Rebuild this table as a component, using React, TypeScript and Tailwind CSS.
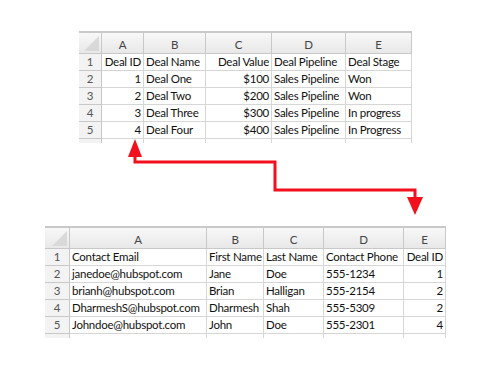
import React from "react";

type Col = { w: number; align: "left" | "right" };

const font = { fontFamily: "Lato, 'Open Sans', sans-serif" };

function Sheet({
  cols,
  letters,
  rows,
  rnW,
}: {
  cols: Col[];
  letters: string[];
  rows: string[][];
  rnW: number;
}) {
  const template = [rnW, ...cols.map((c) => c.w)].map((w) => `${w}px`).join(" ");
  return (
    <div className="text-[11.5px] tracking-[-0.25px] text-[#111]" style={font}>
      <div className="border-t-2 border-[#c9c9c9]">
        <div className="grid" style={{ gridTemplateColumns: template }}>
          <div className="relative h-[21px] bg-gradient-to-b from-[#f8f8f8] to-[#e8e8e8] border-r border-b border-[#c8c8c8]">
            <div
              className="absolute right-[2px] bottom-[2px] w-[15px] h-[15px] bg-[#d9d9d9]"
              style={{ clipPath: "polygon(100% 0, 100% 100%, 0 100%)" }}
            />
          </div>
          {letters.map((l) => (
            <div
              key={l}
              className="h-[21px] pt-[3px] flex items-center justify-center bg-gradient-to-b from-[#f8f8f8] to-[#e8e8e8] border-r border-b border-[#c8c8c8] text-[#444]"
            >
              {l}
            </div>
          ))}
          {rows.map((r, i) => (
            <React.Fragment key={i}>
              <div className="h-[17px] flex items-center justify-center bg-[#f3f3f3] border-r border-b border-[#c8c8c8] text-[#555]">
                {i + 1}
              </div>
              {r.map((cell, j) => (
                <div
                  key={j}
                  className={`h-[17px] flex items-center px-[2px] border-r border-b border-[#d6d6d6] whitespace-nowrap ${
                    cols[j].align === "right" ? "justify-end" : "justify-start"
                  }`}
                >
                  {cell}
                </div>
              ))}
            </React.Fragment>
          ))}
          <div className="h-[4px] bg-[#f3f3f3] border-r border-[#c8c8c8]" />
          {cols.map((_, j) => (
            <div key={j} className="h-[4px] border-r border-[#d6d6d6]" />
          ))}
        </div>
      </div>
    </div>
  );
}

export default function App() {
  return (
    <div className="w-[504px] h-[374px] bg-white pt-[31px] overflow-hidden">
      <div className="ml-[79px] w-fit">
        <Sheet
          rnW={23}
          letters={["A", "B", "C", "D", "E"]}
          cols={[
            { w: 42, align: "right" },
            { w: 62, align: "left" },
            { w: 66, align: "right" },
            { w: 74, align: "left" },
            { w: 66, align: "left" },
          ]}
          rows={[
            ["Deal ID", "Deal Name", "Deal Value", "Deal Pipeline", "Deal Stage"],
            ["1", "Deal One", "$100", "Sales Pipeline", "Won"],
            ["2", "Deal Two", "$200", "Sales Pipeline", "Won"],
            ["3", "Deal Three", "$300", "Sales Pipeline", "In progress"],
            ["4", "Deal Four", "$400", "Sales Pipeline", "In Progress"],
          ]}
        />
      </div>
      <svg width="504" height="88" viewBox="0 0 504 88" className="block -mt-[5px] relative">
        <polyline
          points="135,18 135,24 275,24 275,52 415,52 415,60"
          fill="none"
          stroke="#f2101c"
          strokeWidth="3"
          strokeLinejoin="miter"
        />
        <polygon points="135,1 128,19 142,19" fill="#f2101c" />
        <polygon points="407,59 423,59 415,77" fill="#f2101c" />
      </svg>
      <div className="ml-[45px] w-fit">
        <Sheet
          rnW={25}
          letters={["A", "B", "C", "D", "E"]}
          cols={[
            { w: 137, align: "left" },
            { w: 57, align: "left" },
            { w: 60, align: "left" },
            { w: 80, align: "left" },
            { w: 42, align: "right" },
          ]}
          rows={[
            ["Contact Email", "First Name", "Last Name", "Contact Phone", "Deal ID"],
            ["janedoe@hubspot.com", "Jane", "Doe", "555-1234", "1"],
            ["brianh@hubspot.com", "Brian", "Halligan", "555-2154", "2"],
            ["DharmeshS@hubspot.com", "Dharmesh", "Shah", "555-5309", "2"],
            ["Johndoe@hubspot.com", "John", "Doe", "555-2301", "4"],
          ]}
        />
      </div>
    </div>
  );
}
